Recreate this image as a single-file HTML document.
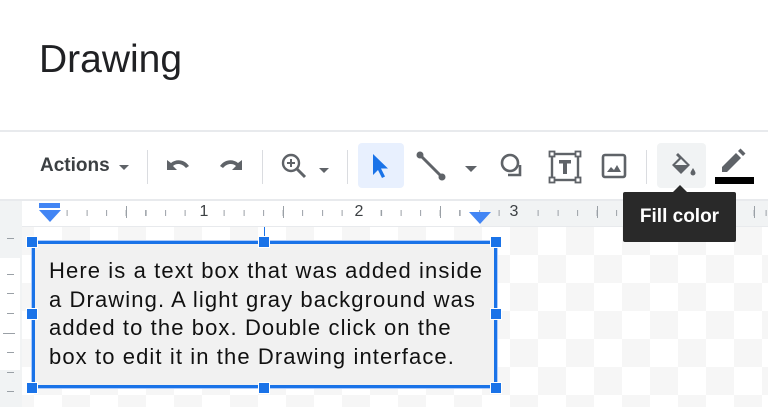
<!DOCTYPE html>
<html><head><meta charset="utf-8"><style>
*{margin:0;padding:0;box-sizing:border-box}
body{width:768px;height:407px;overflow:hidden;background:#fff;font-family:"Liberation Sans",Arial,sans-serif;position:relative}
.a{position:absolute}
.sep{position:absolute;top:150px;width:1px;height:34px;background:#dadce0}
.h{position:absolute;width:12px;height:12px;background:#1a73e8;border:1px solid #fff}
</style></head><body>
<div class="a" style="left:39px;top:38px;font-size:39px;color:#202124">Drawing</div>
<div class="a" style="left:0;top:130px;width:768px;height:2px;background:#e8eaed"></div>

<!-- toolbar -->
<div class="a" style="left:40px;top:155px;font-size:19px;font-weight:bold;color:#3c4043">Actions</div>
<svg class="a" style="left:118px;top:163px" width="12" height="8"><path d="M1 2h10l-5 5z" fill="#5f6368"/></svg>
<div class="sep" style="left:147px"></div>
<svg class="a" style="left:163px;top:152px" width="34" height="28" viewBox="0 0 34 28"><path d="M4 8v10h10l-4-4c3-3 9-3 13 2l3-2c-5-7-13-7-18-3z" fill="#5f6368"/></svg>
<svg class="a" style="left:212px;top:152px" width="34" height="28" viewBox="0 0 34 28"><path d="M30 8v10H20l4-4c-3-3-9-3-13 2l-3-2c5-7 13-7 18-3z" fill="#5f6368"/></svg>
<div class="sep" style="left:262px"></div>
<svg class="a" style="left:279px;top:150px" width="30" height="30" viewBox="0 0 30 30"><circle cx="12" cy="13" r="8" fill="none" stroke="#5f6368" stroke-width="2.4"/><path d="M18 19l8 8" stroke="#5f6368" stroke-width="3"/><path d="M12 9v8M8 13h8" stroke="#5f6368" stroke-width="2"/></svg>
<svg class="a" style="left:318px;top:167px" width="12" height="8"><path d="M1 1h10l-5 5z" fill="#5f6368"/></svg>
<div class="sep" style="left:347px"></div>
<div class="a" style="left:358px;top:143px;width:46px;height:45px;background:#e8f0fe;border-radius:4px"></div>
<svg class="a" style="left:370px;top:152px" width="22" height="28" viewBox="0 0 22 28"><path d="M3 2v21l5-5 4 8 3-1.5-4-8h7z" fill="#1a73e8"/></svg>
<svg class="a" style="left:414px;top:150px" width="34" height="32" viewBox="0 0 34 32"><path d="M7 6l20 20" stroke="#5f6368" stroke-width="3"/><circle cx="6" cy="5" r="3.5" fill="#5f6368"/><circle cx="28" cy="27" r="3.5" fill="#5f6368"/></svg>
<svg class="a" style="left:464px;top:165px" width="14" height="8"><path d="M1 1h12l-6 6z" fill="#5f6368"/></svg>
<svg class="a" style="left:498px;top:151px" width="30" height="30" viewBox="0 0 30 30"><circle cx="12" cy="12" r="8" fill="none" stroke="#5f6368" stroke-width="2.6"/><path d="M22 14v10H10" fill="none" stroke="#5f6368" stroke-width="2.6"/></svg>
<svg class="a" style="left:548px;top:150px" width="34" height="34" viewBox="0 0 34 34"><rect x="4" y="4" width="26" height="26" fill="none" stroke="#5f6368" stroke-width="2.4"/><rect x="1.5" y="1.5" width="5" height="5" fill="#fff" stroke="#5f6368" stroke-width="1.8"/><rect x="27.5" y="1.5" width="5" height="5" fill="#fff" stroke="#5f6368" stroke-width="1.8"/><rect x="1.5" y="27.5" width="5" height="5" fill="#fff" stroke="#5f6368" stroke-width="1.8"/><rect x="27.5" y="27.5" width="5" height="5" fill="#fff" stroke="#5f6368" stroke-width="1.8"/><path d="M11 10h12v3.5h-4V24h-4V13.5h-4z" fill="#5f6368"/></svg>
<svg class="a" style="left:601px;top:153px" width="26" height="26" viewBox="0 0 26 26"><rect x="2" y="2" width="22" height="22" rx="2" fill="none" stroke="#5f6368" stroke-width="2.6"/><path d="M6 19l4-5 3 3 3-5 4 7z" fill="#5f6368"/></svg>
<div class="sep" style="left:646px"></div>
<div class="a" style="left:657px;top:143px;width:49px;height:45px;background:#f1f3f4;border-radius:4px"></div>
<svg class="a" style="left:666px;top:150px" width="32" height="32" viewBox="0 0 32 32"><path d="M12 3l-2 2 3 3-7 7 9 9 9-9z" fill="#5f6368"/><path d="M9 15l6-6 6 6z" fill="#f1f3f4"/><path d="M27 18c-1.5 2.5-2.5 4-2.5 5a2.5 2.5 0 005 0c0-1-1-2.5-2.5-5z" fill="#5f6368"/></svg>
<svg class="a" style="left:717px;top:148px" width="34" height="28" viewBox="0 0 34 28"><path d="M5 24v-5L19 5l5 5L10 24z" fill="#5f6368"/><path d="M21 3l2.5-2.5 5 5L26 8z" fill="#5f6368"/></svg>
<div class="a" style="left:715px;top:177px;width:39px;height:7px;background:#000"></div>

<!-- ruler -->
<div class="a" style="left:0;top:199px;width:768px;height:2px;background:#e8eaed"></div>
<div class="a" style="left:0;top:201px;width:22px;height:206px;background:#f1f3f4"></div>
<div class="a" style="left:0;top:258px;width:20px;height:112px;background:#fff"></div>
<div class="a" style="left:22px;top:201px;width:746px;height:25px;background:#fff"></div>
<div class="a" style="left:480px;top:201px;width:288px;height:25px;background:#f1f3f4"></div>
<div class="a" style="left:22px;top:226px;width:746px;height:1px;background:#e8eaed"></div>
<div class="a" style="left:30px;top:210px;width:738px;height:6px;background:repeating-linear-gradient(90deg,#9aa0a6 0 1px,transparent 1px 19.625px);background-position:-2.4px 0"></div>
<div class="a" style="left:126px;top:206px;width:640px;height:12px;background:repeating-linear-gradient(90deg,#9aa0a6 0 1px,transparent 1px 157px)"></div>
<div class="a" style="left:196px;top:203px;width:16px;height:20px;background:#fff;font-size:16px;color:#3c4043;text-align:center">1</div>
<div class="a" style="left:351px;top:203px;width:16px;height:20px;background:#fff;font-size:16px;color:#3c4043;text-align:center">2</div>
<div class="a" style="left:506px;top:203px;width:16px;height:20px;background:#f1f3f4;font-size:16px;color:#3c4043;text-align:center">3</div>
<div class="a" style="left:39px;top:203px;width:21px;height:5px;background:#4285f4"></div>
<svg class="a" style="left:38px;top:209px" width="24" height="14"><path d="M1 1h22l-11 12z" fill="#4285f4"/></svg>
<svg class="a" style="left:468px;top:211px" width="24" height="14"><path d="M1 1h22l-11 12z" fill="#4285f4"/></svg>
<div class="a" style="left:7px;top:238px;width:7px;height:1px;background:#9aa0a6"></div>
<div class="a" style="left:7px;top:274px;width:7px;height:1px;background:#9aa0a6"></div>
<div class="a" style="left:7px;top:293px;width:7px;height:1px;background:#9aa0a6"></div>
<div class="a" style="left:7px;top:313px;width:7px;height:1px;background:#9aa0a6"></div>
<div class="a" style="left:3px;top:333px;width:12px;height:1px;background:#9aa0a6"></div>
<div class="a" style="left:7px;top:352px;width:7px;height:1px;background:#9aa0a6"></div>
<div class="a" style="left:7px;top:372px;width:7px;height:1px;background:#9aa0a6"></div>
<div class="a" style="left:7px;top:391px;width:7px;height:1px;background:#9aa0a6"></div>

<!-- canvas -->
<div class="a" style="left:22px;top:227px;width:746px;height:180px;background-color:#fff;background-image:conic-gradient(#f6f6f6 0 25%,#fff 0 50%,#f6f6f6 0 75%,#fff 0);background-size:56px 56px;background-position:-44px 0px"></div>

<!-- text box -->
<div class="a" style="left:32px;top:241px;width:465px;height:147px;background:#f1f1f1;border:3px solid #1a73e8;box-shadow:0 0 0 1px #aecbfa"></div>
<div class="a" style="left:49px;top:257px;width:442px;font-size:22px;letter-spacing:1.1px;line-height:28.5px;color:#111;white-space:nowrap">Here is a text box that was added inside<br>a Drawing. A light gray background was<br>added to the box. Double click on the<br>box to edit it in the Drawing interface.</div>
<div class="a" style="left:264px;top:227px;width:1px;height:10px;background:#1a73e8"></div>
<div class="h" style="left:26px;top:236px"></div>
<div class="h" style="left:258px;top:236px"></div>
<div class="h" style="left:490px;top:236px"></div>
<div class="h" style="left:26px;top:308px"></div>
<div class="h" style="left:490px;top:308px"></div>
<div class="h" style="left:26px;top:382px"></div>
<div class="h" style="left:258px;top:382px"></div>
<div class="h" style="left:490px;top:382px"></div>

<!-- tooltip -->
<svg class="a" style="left:672px;top:184px" width="16" height="9"><path d="M0 9L8 1l8 8z" fill="#292929"/></svg>
<div class="a" style="left:623px;top:192px;width:113px;height:50px;background:#292929;border-radius:2px;color:#fff;font-size:19px;line-height:50px;text-align:center;font-weight:bold">Fill color</div>
</body></html>
